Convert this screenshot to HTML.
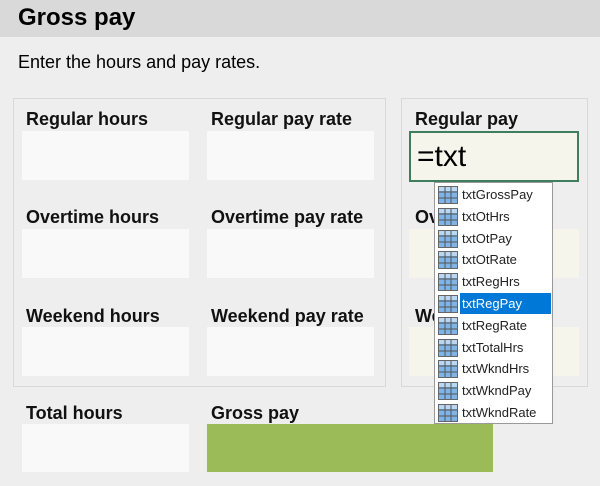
<!DOCTYPE html><html><head><style>
body{margin:0;width:600px;height:486px;background:#eeeeee;font-family:"Liberation Sans",sans-serif;position:relative;overflow:hidden}
.a{position:absolute}
.h{left:0;top:0;width:600px;height:37px;background:#d9d9d9}
.t{left:18px;top:4px;font-size:24px;font-weight:bold;color:#000}
.s{left:18px;top:52px;font-size:18px;color:#000}
.p{border:1px solid #d8d8d8}
.l{font-size:18px;font-weight:bold;color:#111}
.i{background:#f9f9f9;width:167px;height:49px}
.r{background:#f5f5ec;width:170px;height:49px}
.dd{left:434px;top:182px;width:119px;height:242px;background:#fff;border:1px solid #999;box-sizing:border-box}
.it{position:absolute;left:2px;height:21px;width:115px;font-size:13px;color:#222;line-height:21px}
.it svg{position:absolute;left:1px;top:2px}
.it span{position:absolute;left:23px;top:0;padding:0 2px}
.sel span{background:#0078d7;color:#fff;width:87px;left:23px}
</style></head><body>
<div class="a h"></div><div class="a t">Gross pay</div>
<div class="a s">Enter the hours and pay rates.</div>
<div class="a p" style="left:13px;top:98px;width:371px;height:287px"></div>
<div class="a p" style="left:401px;top:98px;width:185px;height:287px"></div>
<div class="a l" style="left:26px;top:109px">Regular hours</div>
<div class="a l" style="left:211px;top:109px">Regular pay rate</div>
<div class="a l" style="left:415px;top:109px">Regular pay</div>
<div class="a i" style="left:22px;top:131px"></div>
<div class="a i" style="left:207px;top:131px"></div>
<div class="a" style="left:409px;top:131px;height:47px;border:2px solid #3d7f5c;background:#f5f5ec;font-size:30px;line-height:47px;padding-left:6px;width:160px">=txt</div>
<div class="a l" style="left:26px;top:207px">Overtime hours</div>
<div class="a l" style="left:211px;top:207px">Overtime pay rate</div>
<div class="a l" style="left:415px;top:207px">Ov</div>
<div class="a i" style="left:22px;top:229px"></div>
<div class="a i" style="left:207px;top:229px"></div>
<div class="a r" style="left:409px;top:229px"></div>
<div class="a l" style="left:26px;top:306px">Weekend hours</div>
<div class="a l" style="left:211px;top:306px">Weekend pay rate</div>
<div class="a l" style="left:415px;top:306px">We</div>
<div class="a i" style="left:22px;top:327px"></div>
<div class="a i" style="left:207px;top:327px"></div>
<div class="a r" style="left:409px;top:327px"></div>
<div class="a l" style="left:26px;top:403px">Total hours</div>
<div class="a l" style="left:211px;top:403px">Gross pay</div>
<div class="a i" style="left:22px;top:424px;height:48px"></div>
<div class="a" style="left:207px;top:424px;width:286px;height:48px;background:#9bbb59"></div>
<div class="a dd">
<script>
var n=["txtGrossPay","txtOtHrs","txtOtPay","txtOtRate","txtRegHrs","txtRegPay","txtRegRate","txtTotalHrs","txtWkndHrs","txtWkndPay","txtWkndRate"];
var ic='<svg width="20" height="18" viewBox="0 0 20 18"><rect x="0.5" y="0.5" width="19" height="17" fill="#7fb4e8" stroke="#666"/><rect x="1" y="1" width="18" height="4" fill="#b9d6f2"/><path d="M7 1V17M13 1V17M1 6H19M1 12H19" stroke="#555" stroke-width="1"/></svg>';
for(var k=0;k<n.length;k++)document.write('<div class="it'+(k==5?' sel':'')+'" style="top:'+(1+k*21.8)+'px">'+ic+'<span>'+n[k]+'</span></div>');
</script>
</div>
</body></html>
